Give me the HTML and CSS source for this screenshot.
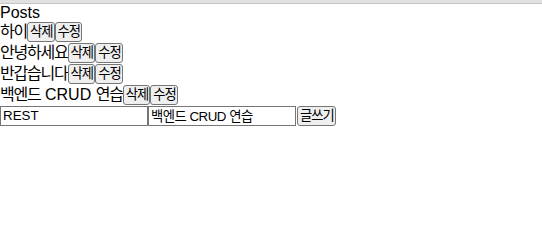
FILE: index.html
```html
<!DOCTYPE html>
<html lang="ko">
<head>
<meta charset="utf-8">
<link rel="stylesheet" href="styles.css">
</head>
<body>
<div class="topbar"></div>
<div class="title">Posts</div>
<div class="row"><span class="text ko">하이</span><button class="btn">삭제</button><button class="btn">수정</button></div>
<div class="row"><span class="text ko">안녕하세요</span><button class="btn">삭제</button><button class="btn">수정</button></div>
<div class="row"><span class="text ko">반갑습니다</span><button class="btn">삭제</button><button class="btn">수정</button></div>
<div class="row"><span class="text"><span class="ko">백엔드</span> CRUD <span class="ko">연습</span></span><button class="btn">삭제</button><button class="btn">수정</button></div>
<form class="row form">
<input class="field" type="text" value="REST">
<input class="field field-ko" type="text" value="백엔드 CRUD 연습">
<button class="btn submit" type="button">글쓰기</button>
</form>
</body>
</html>
```

FILE: styles.css
```css
html, body {
  margin: 0;
  padding: 0;
  background: #fff;
  color: #000;
  font-family: "Liberation Sans", "Noto Sans CJK KR", sans-serif;
  font-size: 16px;
}
.topbar {
  height: 3px;
  background: #e1e1e1;
  border-bottom: 1px solid #c4c4c4;
}
.title {
  height: 17px;
  line-height: 17px;
}
.row {
  display: flex;
  align-items: center;
  height: 21px;
  margin: 0;
}
.text {
  line-height: 18px;
  white-space: pre;
}
.ko {
  letter-spacing: -1.2px;
}
.btn {
  font-family: "Liberation Sans", "Noto Sans CJK KR", sans-serif;
  font-size: 13.33px;
  height: 20px;
  line-height: 16px;
  padding: 0 1px 0 2px;
  margin: 0;
  border: 1px solid #767676;
  border-radius: 3px;
  background: #efefef;
  color: #000;
  letter-spacing: -1px;
}
.field {
  box-sizing: border-box;
  width: 148px;
  height: 20px;
  margin: 0;
  padding: 0 2px;
  border: 1px solid #767676;
  font-family: "Liberation Sans", "Noto Sans CJK KR", sans-serif;
  font-size: 13.33px;
  color: #000;
}
.field-ko {
  letter-spacing: -0.5px;
}
.submit {
  margin-left: 1px;
  padding: 0 1px 0 2px;
}
```
